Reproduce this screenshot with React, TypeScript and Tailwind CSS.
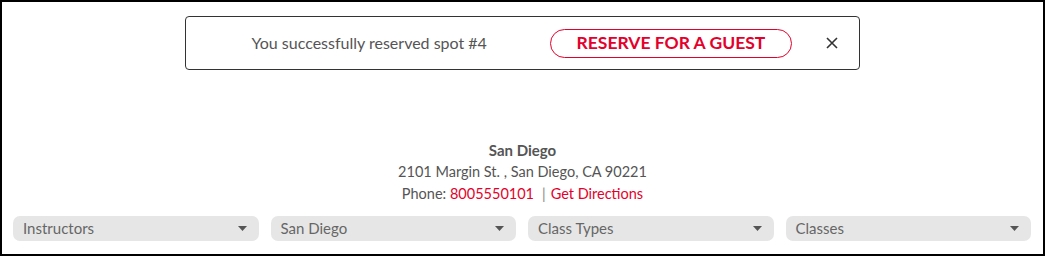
import React from "react";

const filters = ["Instructors", "San Diego", "Class Types", "Classes"];

export default function App() {
  return (
    <div
      className="box-border flex h-[256px] w-[1045px] flex-col border-2 border-black bg-white"
      style={{ fontFamily: "Lato, 'Open Sans', sans-serif" }}
    >
      {/* reservation banner */}
      <div className="mt-[14px] flex justify-center pr-px">
        <div className="flex h-[54px] w-[675px] items-center rounded-[4px] border border-[#333] pl-[66px]">
          <span className="text-[16px] text-[#555]">You successfully reserved spot #4</span>
          <button className="ml-[63px] h-[29px] w-[242px] rounded-full border border-[#e4002b] text-[17.5px] font-bold text-[#e4002b]">
            RESERVE FOR A GUEST
          </button>
          <button className="ml-[30px] flex h-5 w-5 items-center justify-center text-[#333]">
            <svg width="12" height="12" viewBox="0 0 12 12" fill="none" stroke="currentColor" strokeWidth="1.6">
              <path d="M1 1L11 11M11 1L1 11" />
            </svg>
          </button>
        </div>
      </div>

      {/* studio info */}
      <div className="mt-[69px] flex flex-col items-center text-[#555]">
        <p className="text-[15px] leading-[22px] font-bold">San Diego</p>
        <p className="text-[14.5px] leading-[22px]">2101 Margin St. , San Diego, CA 90221</p>
        <p className="text-[14.5px] leading-[22px]">
          Phone: <span className="text-[#e4002b]">8005550101</span>
          <span className="ml-[8px] mr-[5px] text-[#888]">|</span>
          <span className="text-[#e4002b]">Get Directions</span>
        </p>
      </div>

      {/* filters */}
      <div className="mt-[11px] grid grid-cols-4 gap-[12px] pl-[11px] pr-[12px]">
        {filters.map((f) => (
          <div
            key={f}
            className="flex h-[25px] items-center justify-between rounded-[7px] bg-[#e6e6e6] pl-[10px] pr-[12px] text-[15px] text-[#666]"
          >
            <span>{f}</span>
            <svg width="9" height="5" viewBox="0 0 9 5">
              <path d="M0 0H9L4.5 5Z" fill="#555" />
            </svg>
          </div>
        ))}
      </div>
    </div>
  );
}
